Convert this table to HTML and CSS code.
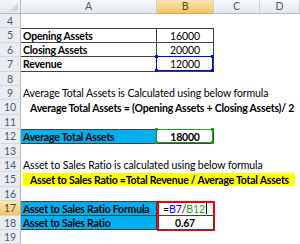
FILE: index.html
```html
<!DOCTYPE html>
<html>
<head>
<meta charset="utf-8">
<link rel="stylesheet" href="styles.css">
</head>
<body>
<div class="sheet">
  <div class="row hdr">
    <div class="corner"></div>
    <div class="ch">A</div>
    <div class="ch on">B</div>
    <div class="ch">C</div>
    <div class="ch">D</div>
  </div>
  <div class="row"><div class="rh">4</div><div class="c"></div><div class="c"></div><div class="c"></div><div class="c"></div></div>
  <div class="row tall"><div class="rh">5</div><div class="c bold bx top">Opening Assets</div><div class="c num bx top">16000</div><div class="c"></div><div class="c"></div></div>
  <div class="row"><div class="rh">6</div><div class="c bold bx">Closing Assets</div><div class="c num bx">20000</div><div class="c"></div><div class="c"></div></div>
  <div class="row tall"><div class="rh">7</div><div class="c bold bx">Revenue</div><div class="c num bx sel">12000<span class="ref blue"><i class="h tl"></i><i class="h tr"></i><i class="h bl"></i><i class="h br"></i></span></div><div class="c"></div><div class="c"></div></div>
  <div class="row"><div class="rh">8</div><div class="c"></div><div class="c"></div><div class="c"></div><div class="c"></div></div>
  <div class="row"><div class="rh">9</div><div class="c span">Average Total Assets is Calculated using below formula</div></div>
  <div class="row tall"><div class="rh">10</div><div class="c span bold indent">Average Total Assets = (Opening Assets + Closing Assets)/ 2</div></div>
  <div class="row"><div class="rh">11</div><div class="c"></div><div class="c"></div><div class="c"></div><div class="c"></div></div>
  <div class="row tall"><div class="rh">12</div><div class="c bold fill bx top">Average Total Assets</div><div class="c num bold bx top sel">18000<span class="ref green"><i class="h tl"></i><i class="h tr"></i><i class="h bl"></i><i class="h br"></i></span></div><div class="c"></div><div class="c"></div></div>
  <div class="row"><div class="rh">13</div><div class="c"></div><div class="c"></div><div class="c"></div><div class="c"></div></div>
  <div class="row"><div class="rh">14</div><div class="c span">Asset to Sales Ratio is calculated using below formula</div></div>
  <div class="row tall"><div class="rh">15</div><div class="c span bold"><span class="hl">Asset to Sales Ratio =Total Revenue / Average Total Assets</span></div></div>
  <div class="row"><div class="rh">16</div><div class="c"></div><div class="c"></div><div class="c"></div><div class="c"></div></div>
  <div class="row tall"><div class="rh on">17</div><div class="c bold fill bx top">Asset to Sales Ratio Formula</div><div class="c num bx top sel">=<span class="fb">B7</span>/<span class="fg">B12</span><span class="caret"></span><span class="redbox"></span></div><div class="c"></div><div class="c"></div></div>
  <div class="row"><div class="rh">18</div><div class="c bold fill bx">Asset to Sales Ratio</div><div class="c num bold bx">0.67</div><div class="c"></div><div class="c"></div></div>
  <div class="row"><div class="rh">19</div><div class="c"></div><div class="c"></div><div class="c"></div><div class="c"></div></div>
</div>
</body>
</html>
```
FILE: styles.css
```css
* { box-sizing: border-box; margin: 0; padding: 0; }
body {
  margin: 0;
  width: 300px;
  height: 244px;
  overflow: hidden;
  background: #fff;
  font-family: Lato, "Liberation Sans", sans-serif;
  font-size: 10.5px;
  letter-spacing: -0.1px;
  color: #000;
}
.sheet { display: flex; flex-direction: column; width: 300px; }
.row {
  display: grid;
  grid-template-columns: 21px 136px 57px 46px 40px;
  height: 14px;
}
.row.tall { height: 15px; }
.corner {
  position: relative;
  background: linear-gradient(#f4f5f7, #e4e7eb);
  border-right: 1px solid #b6bdc7;
  border-bottom: 1px solid #b6bdc7;
}
.corner::after {
  content: "";
  position: absolute;
  right: 2px;
  bottom: 2px;
  border-left: 8px solid transparent;
  border-bottom: 8px solid #d2d6dc;
}
.ch {
  background: linear-gradient(#f8f9fa, #e4e7eb);
  border-right: 1px solid #cbd0d6;
  border-bottom: 1px solid #b2bac5;
  color: #4b5b70;
  text-align: center;
  line-height: 13px;
}
.ch.on {
  background: linear-gradient(#fbe6b0, #f2c566);
  border-bottom-color: #f29a3c;
  color: #5a4a24;
}
.rh {
  background: #e9ecf0;
  border-right: 1px solid #b2bac5;
  border-bottom: 1px solid #d3d8de;
  color: #4b5b70;
  display: flex;
  align-items: center;
  justify-content: center;
}
.rh.on {
  background: linear-gradient(#fbe6b0, #f2c566);
  border-right-color: #f29a3c;
  color: #5a4a24;
}
.c {
  position: relative;
  white-space: nowrap;
  padding-left: 2px;
  display: flex;
  align-items: center;
}
.span { grid-column: 2 / 6; }
.bold { font-weight: 700; letter-spacing: -0.22px; }
.indent { padding-left: 9px; }
.num { justify-content: center; padding-left: 0; }
.bx {
  border-right: 1px solid #404040;
  border-bottom: 1px solid #404040;
}
.bx.top { border-top: 1px solid #404040; }
.fill { background: #00b0f0; }
.hl {
  display: flex;
  align-items: center;
  width: 272px;
  height: 13px;
  padding-left: 7px;
  background: #ffff00;
}
.ref {
  position: absolute;
  left: -1px;
  top: -1px;
  right: 0;
  bottom: 0;
  border: 1px solid currentColor;
}
.ref.blue { color: #0000ff; }
.ref.green { color: #1e9e2e; }
.h {
  position: absolute;
  width: 3px;
  height: 3px;
  background: currentColor;
}
.h.tl { left: -2px; top: -2px; }
.h.tr { right: -2px; top: -2px; }
.h.bl { left: -2px; bottom: -2px; }
.h.br { right: -2px; bottom: -2px; }
.fb { color: #0000ff; }
.fg { color: #1e9e2e; }
.caret {
  display: inline-block;
  width: 1px;
  height: 11px;
  margin-left: 1px;
  background: #000;
}
.redbox {
  position: absolute;
  left: 0;
  top: -1px;
  width: 58px;
  height: 30px;
  border: 2px solid #ff0000;
}
```
